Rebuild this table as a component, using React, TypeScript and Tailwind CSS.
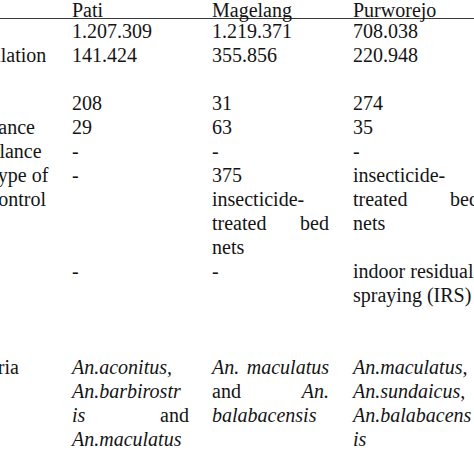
import React from 'react';

type Line = React.ReactNode;

interface RowProps {
  cells: Line[][];
  minH?: string;
  header?: boolean;
}

// justified line: words pushed to both edges of the cell
const J = ({ children }: { children: React.ReactNode }) => (
  <div className="flex justify-between">{children}</div>
);

const colPad = ['pr-[12px] whitespace-nowrap', 'pr-[23px]', 'pr-[24px]', 'pr-0'];

const Row = ({ cells, minH = '', header = false }: RowProps) => (
  <div
    className={`grid grid-cols-[192px_140px_141px_126px] ${minH} ${
      header ? 'h-[21px] border-b-[1.5px] border-[#3a3a3a]' : ''
    }`}
  >
    {cells.map((lines, i) => (
      <div key={i} className={`${colPad[i]} ${i === 3 ? 'whitespace-nowrap' : ''}`}>
        {lines.map((l, j) => (
          <div key={j}>{l}</div>
        ))}
      </div>
    ))}
  </div>
);

export default function App() {
  return (
    <div className="w-[474px] h-[474px] overflow-hidden bg-white text-[#141414] text-[20px] leading-[24px] font-['Liberation_Serif','Times_New_Roman',serif]">
      <div className="ml-[-120px] mt-[-2px] w-[599px]">
        {/* Header */}
        <Row header cells={[[''], ['Pati'], ['Magelang'], ['Purworejo']]} />

        <Row cells={[['Population (N)'], ['1.207.309'], ['1.219.371'], ['708.038']]} />
        <Row cells={[['Total risk population', '(people)'], ['141.424'], ['355.856'], ['220.948']]} />
        <Row cells={[['Malaria cases'], ['208'], ['31'], ['274']]} />
        <Row cells={[['Active surveillance'], ['29'], ['63'], ['35']]} />
        <Row cells={[['Passive surveillance'], ['-'], ['-'], ['-']]} />

        {/* Vector control */}
        <Row
          cells={[
            ['Numbers and type of', 'on the vector control'],
            ['-'],
            [
              '375',
              'insecticide-',
              <J>
                <span>treated</span>
                <span>bed</span>
              </J>,
              'nets',
            ],
            [
              'insecticide-',
              <J>
                <span>treated</span>
                <span>bed</span>
              </J>,
              'nets',
            ],
          ]}
        />
        <Row
          minH="min-h-[96px]"
          cells={[[''], ['-'], ['-'], ['indoor residual', 'spraying (IRS)']]}
        />

        {/* Vector species */}
        <Row
          cells={[
            ['Vector of malaria'],
            [
              <i>An.aconitus,</i>,
              <i>An.barbirostr</i>,
              <J>
                <i>is</i>
                <span>and</span>
              </J>,
              <i>An.maculatus</i>,
            ],
            [
              <J>
                <i>An.</i>
                <i>maculatus</i>
              </J>,
              <J>
                <span>and</span>
                <i>An.</i>
              </J>,
              <i>balabacensis</i>,
            ],
            [
              <i>An.maculatus,</i>,
              <i>An.sundaicus,</i>,
              <i>An.balabacens</i>,
              <i>is</i>,
            ],
          ]}
        />
      </div>
    </div>
  );
}
